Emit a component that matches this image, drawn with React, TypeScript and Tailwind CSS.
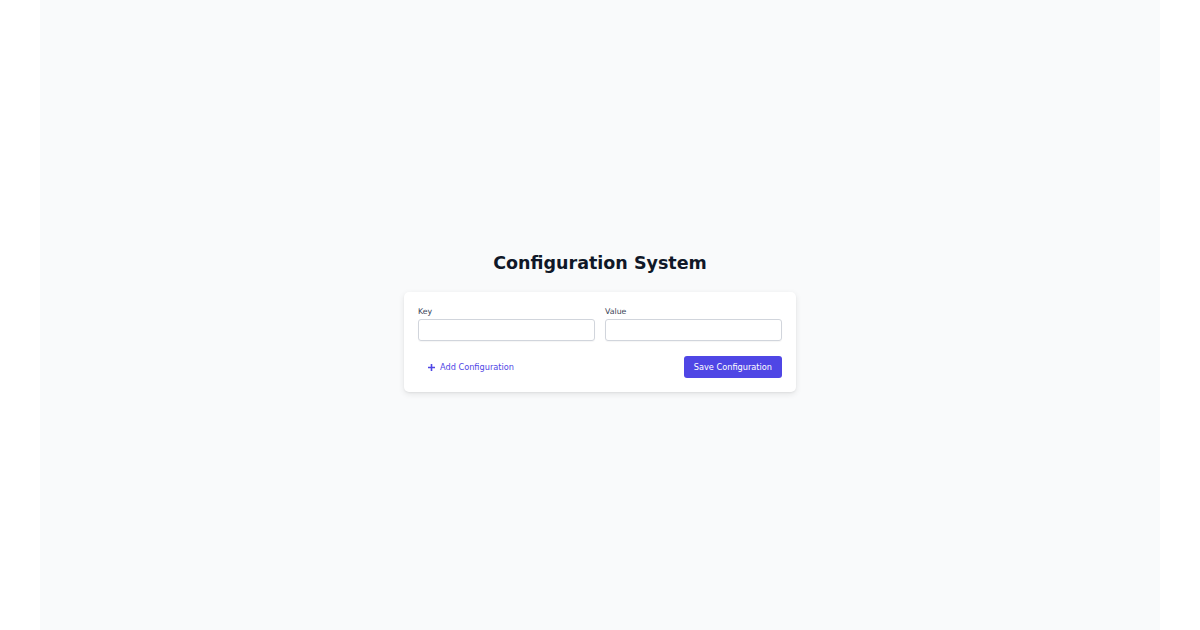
import React, { useState } from 'react';

type ConfigRow = { key: string; value: string };

const App: React.FC = () => {
  const [rows, setRows] = useState<ConfigRow[]>([{ key: '', value: '' }]);

  const updateRow = (index: number, field: keyof ConfigRow, value: string) => {
    setRows(rows.map((row, i) => (i === index ? { ...row, [field]: value } : row)));
  };

  return (
    <div className="bg-white px-10 font-['DejaVu_Sans',sans-serif]">
      <div className="bg-gray-50 h-[630px] flex flex-col items-center justify-center pt-[11px]">
        {/* Title */}
        <h1 className="text-[17.5px] leading-[27px] font-bold text-gray-900 mb-[15px]">
          Configuration System
        </h1>

        {/* Config Card */}
        <div className="w-[392px] bg-white rounded-[5px] shadow-[0_2px_6px_rgba(0,0,0,0.09),0_1px_2px_rgba(0,0,0,0.05)] p-[14px]">
          {rows.map((row, i) => (
            <div key={i} className="grid grid-cols-2 gap-[10px]">
              <div>
                <label className="block text-[7.8px] leading-[11px] text-gray-700 mb-[2px]">Key</label>
                <input
                  value={row.key}
                  onChange={(e) => updateRow(i, 'key', e.target.value)}
                  className="block w-full h-[22px] rounded-[3px] border border-gray-300 shadow-[0_1px_1px_rgba(0,0,0,0.04)] px-2 text-[8px] outline-none"
                />
              </div>
              <div>
                <label className="block text-[7.8px] leading-[11px] text-gray-700 mb-[2px]">Value</label>
                <input
                  value={row.value}
                  onChange={(e) => updateRow(i, 'value', e.target.value)}
                  className="block w-full h-[22px] rounded-[3px] border border-gray-300 shadow-[0_1px_1px_rgba(0,0,0,0.04)] px-2 text-[8px] outline-none"
                />
              </div>
            </div>
          ))}

          <div className="mt-[15px] flex items-center justify-between">
            <button
              onClick={() => setRows([...rows, { key: '', value: '' }])}
              className="flex items-center gap-[5px] h-[22px] pt-[1px] pl-[10px] pr-2 text-[8.2px] text-[#4f46e5]"
            >
              <svg width="7" height="7" viewBox="0 0 7 7" fill="none" stroke="currentColor" strokeWidth="1.6">
                <path d="M3.5 0v7M0 3.5h7" />
              </svg>
              Add Configuration
            </button>
            <button className="h-[22px] px-[10px] pt-[1px] rounded-[3px] bg-[#4f46e5] text-white text-[8.2px]">
              Save Configuration
            </button>
          </div>
        </div>
      </div>
    </div>
  );
};

export default App;
